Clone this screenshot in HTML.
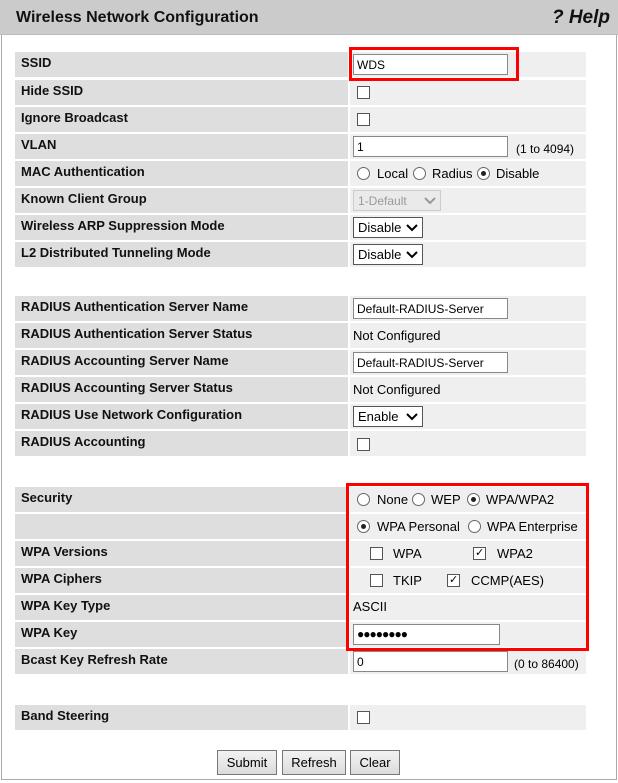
<!DOCTYPE html>
<html><head><meta charset="utf-8"><style>
*{box-sizing:border-box;margin:0;padding:0}
body{width:618px;height:783px;background:#fff;font-family:"Liberation Sans",Arial,sans-serif;position:relative;overflow:hidden;color:#000}
#frame{position:absolute;left:1px;top:0;width:616px;height:780px;border:1px solid #aaa;border-top:none}
#hdr{position:absolute;left:0;top:0;width:618px;height:35px;background:#cbcbcb;border-bottom:1px solid #bbb}
#hdr .t{position:absolute;left:16px;top:9px;font-size:16px;font-weight:bold;color:#111}
#hdr .h{position:absolute;right:8px;top:7px;font-size:19px;font-weight:bold;font-style:italic;color:#111}
.l,.v{position:absolute;height:25px}
.l{left:15px;width:333px;background:#dedede;font-size:13px;font-weight:bold;padding:3px 0 0 6px;color:#111}
.v{left:350px;width:236px;background:#efefef;font-size:13px}
.inp{position:absolute;left:3px;top:2px;width:155px;height:21px;border:1px solid #888;background:#fff;font-size:12px;padding:3px 0 0 3px}
.cb{position:absolute;width:13px;height:13px;border:1px solid #555;background:#fff}
.rd{position:absolute;top:6px;width:13px;height:13px;border:1px solid #666;border-radius:50%;background:#fff}
.rd.on::after{content:"";position:absolute;left:3px;top:3px;width:5px;height:5px;border-radius:50%;background:#222}
.txt{position:absolute;left:3px;top:5px;white-space:nowrap}
.sel{position:absolute;left:3px;top:2px;width:70px;height:21px;border:1px solid #555;background:#fff;font-size:13px;padding:2px 0 0 4px}
.sel svg{position:absolute;right:4px;top:6px}
.red{position:absolute;border:3px solid #f00}
.btn{position:absolute;top:750px;height:25px;border:1px solid #777;background:linear-gradient(#f2f2f2,#dcdcdc);font-size:13px;text-align:center;padding-top:4px}
.ck{position:absolute;left:1px;top:-2px;font-size:11px}
</style></head><body>
<div id="frame"></div>
<div id="hdr"><span class="t">Wireless Network Configuration</span><span class="h">? Help</span></div>

<div class="l" style="top:52px">SSID</div><div class="v" style="top:52px"><div class="inp">WDS</div></div>
<div class="l" style="top:80px">Hide SSID</div><div class="v" style="top:80px"><div class="cb" style="left:7px;top:6px"></div></div>
<div class="l" style="top:107px">Ignore Broadcast</div><div class="v" style="top:107px"><div class="cb" style="left:7px;top:6px"></div></div>
<div class="l" style="top:134px">VLAN</div><div class="v" style="top:134px"><div class="inp">1</div><span class="txt" style="left:166px;top:8px;font-size:12px">(1 to 4094)</span></div>
<div class="l" style="top:161px">MAC Authentication</div><div class="v" style="top:161px"><span class="rd" style="left:7px"></span><span class="txt" style="left:27px">Local</span><span class="rd" style="left:63px"></span><span class="txt" style="left:82px">Radius</span><span class="rd on" style="left:127px"></span><span class="txt" style="left:146px">Disable</span></div>
<div class="l" style="top:188px">Known Client Group</div><div class="v" style="top:188px"><div class="sel" style="width:88px;border-color:#ccc;background:#eaeaea;color:#999;font-size:12px;padding-top:3px">1-Default<svg width="12" height="8"><path d="M1 1L6 6L11 1" stroke="#999" stroke-width="2" fill="none"/></svg></div></div>
<div class="l" style="top:215px">Wireless ARP Suppression Mode</div><div class="v" style="top:215px"><div class="sel">Disable<svg width="12" height="8"><path d="M1 1L6 6L11 1" stroke="#000" stroke-width="2" fill="none"/></svg></div></div>
<div class="l" style="top:242px">L2 Distributed Tunneling Mode</div><div class="v" style="top:242px"><div class="sel">Disable<svg width="12" height="8"><path d="M1 1L6 6L11 1" stroke="#000" stroke-width="2" fill="none"/></svg></div></div>

<div class="l" style="top:296px">RADIUS Authentication Server Name</div><div class="v" style="top:296px"><div class="inp">Default-RADIUS-Server</div></div>
<div class="l" style="top:323px">RADIUS Authentication Server Status</div><div class="v" style="top:323px"><span class="txt" style="top:5px">Not Configured</span></div>
<div class="l" style="top:350px">RADIUS Accounting Server Name</div><div class="v" style="top:350px"><div class="inp">Default-RADIUS-Server</div></div>
<div class="l" style="top:377px">RADIUS Accounting Server Status</div><div class="v" style="top:377px"><span class="txt" style="top:5px">Not Configured</span></div>
<div class="l" style="top:404px">RADIUS Use Network Configuration</div><div class="v" style="top:404px"><div class="sel">Enable<svg width="12" height="8"><path d="M1 1L6 6L11 1" stroke="#000" stroke-width="2" fill="none"/></svg></div></div>
<div class="l" style="top:431px">RADIUS Accounting</div><div class="v" style="top:431px"><div class="cb" style="left:7px;top:7px"></div></div>

<div class="l" style="top:487px">Security</div><div class="v" style="top:487px"><span class="rd" style="left:7px"></span><span class="txt" style="left:27px">None</span><span class="rd" style="left:62px"></span><span class="txt" style="left:81px">WEP</span><span class="rd on" style="left:117px"></span><span class="txt" style="left:136px">WPA/WPA2</span></div>
<div class="l" style="top:514px"></div><div class="v" style="top:514px"><span class="rd on" style="left:7px"></span><span class="txt" style="left:27px">WPA Personal</span><span class="rd" style="left:118px"></span><span class="txt" style="left:137px">WPA Enterprise</span></div>
<div class="l" style="top:541px">WPA Versions</div><div class="v" style="top:541px"><div class="cb" style="left:20px;top:6px"></div><span class="txt" style="left:43px">WPA</span><div class="cb" style="left:123px;top:6px"><span class="ck">✓</span></div><span class="txt" style="left:147px">WPA2</span></div>
<div class="l" style="top:568px">WPA Ciphers</div><div class="v" style="top:568px"><div class="cb" style="left:20px;top:6px"></div><span class="txt" style="left:43px">TKIP</span><div class="cb" style="left:97px;top:6px"><span class="ck">✓</span></div><span class="txt" style="left:121px">CCMP(AES)</span></div>
<div class="l" style="top:595px">WPA Key Type</div><div class="v" style="top:595px"><span class="txt" style="top:4px">ASCII</span></div>
<div class="l" style="top:622px">WPA Key</div><div class="v" style="top:622px"><div class="inp" style="width:147px;font-size:12px;letter-spacing:-1px;padding-top:2px">●●●●●●●●</div></div>
<div class="l" style="top:649px">Bcast Key Refresh Rate</div><div class="v" style="top:649px"><div class="inp">0</div><span class="txt" style="left:164px;top:8px;font-size:12px">(0 to 86400)</span></div>

<div class="l" style="top:705px">Band Steering</div><div class="v" style="top:705px"><div class="cb" style="left:7px;top:6px"></div></div>

<div class="red" style="left:349px;top:47px;width:170px;height:34px"></div>
<div class="red" style="left:346px;top:483px;width:243px;height:168px"></div>

<div class="btn" style="left:217px;width:60px">Submit</div>
<div class="btn" style="left:282px;width:64px">Refresh</div>
<div class="btn" style="left:350px;width:50px">Clear</div>
</body></html>
